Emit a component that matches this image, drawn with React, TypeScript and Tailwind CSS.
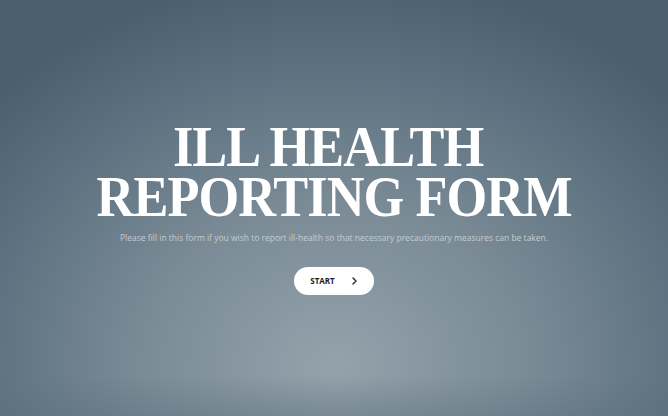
export default function App() {
  return (
    <div className="relative flex h-[416px] w-[668px] flex-col items-center overflow-hidden bg-[radial-gradient(ellipse_70%_95%_at_50%_88%,#94a2ab_0%,#7b8c97_40%,#5d7180_75%,#4b5e6d_100%)]">
      <div className="pointer-events-none absolute inset-x-0 bottom-0 h-[40px] bg-gradient-to-b from-transparent to-[#5b6e7c]/40" />
      <h1 className="mt-[122px] origin-center scale-x-[0.935] text-center font-['Liberation_Serif',serif] text-[56px] font-bold leading-[50px] tracking-[-1px] text-white">
        ILL HEALTH&nbsp;
        <br />
        REPORTING FORM
      </h1>
      <p className="mt-[10px] font-['Open_Sans',sans-serif] text-[8.5px] text-[#c3ccd3]">
        Please fill in this form if you wish to report ill-health so that necessary precautionary measures can be taken.
      </p>
      <button className="mt-[22px] flex h-[28px] w-[80px] items-center justify-center gap-[16px] rounded-full bg-white font-['Open_Sans',sans-serif] text-[8px] font-bold text-[#1f2328]">
        START
        <svg width="7" height="8" viewBox="0 0 7 8" fill="none">
          <path d="M2 1l3 3-3 3" stroke="#1f2328" strokeWidth="1.4" strokeLinecap="round" strokeLinejoin="round" />
        </svg>
      </button>
    </div>
  );
}
